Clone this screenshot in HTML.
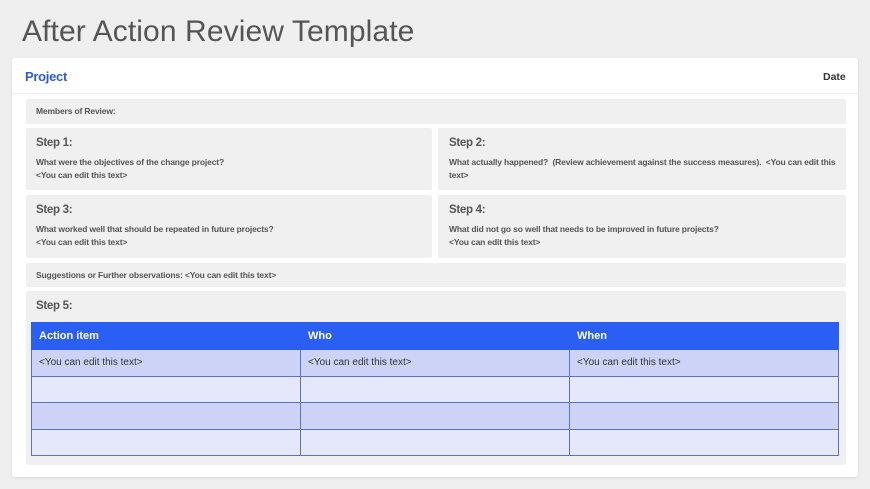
<!DOCTYPE html>
<html><head><meta charset="utf-8"><style>
*{margin:0;padding:0;box-sizing:border-box}
body{width:870px;height:489px;background:#efefef;font-family:"Liberation Sans",sans-serif;position:relative;overflow:hidden}
.abs{position:absolute}
h1{position:absolute;left:22px;top:15px;font-size:30px;font-weight:normal;color:#555;letter-spacing:0.1px}
.card{left:12px;top:58px;width:846px;height:419px;background:#fff;border-radius:3px;box-shadow:0 1px 3px rgba(0,0,0,.1)}
.box{background:#f0f0f0;border-radius:2px}
.st{font-size:11.5px;font-weight:bold;color:#555;letter-spacing:-0.3px}
.tx{font-size:8.5px;color:#555;line-height:13px;font-weight:bold;letter-spacing:-0.15px;white-space:nowrap}
table{position:absolute;left:31px;top:322px;width:808px;border-collapse:collapse;font-size:10px;color:#333}
td{border:1px solid #5b72c8;height:26.5px;padding-left:7px}
th{background:#2b5ef2;color:#fff;text-align:left;padding-left:7px;height:27px;font-size:11px;border:1px solid #2b5ef2}
.a td{background:#ccd3f7}.b td{background:#e5e8fb}
</style></head><body>
<h1>After Action Review Template</h1>
<div class="abs card"></div>
<div class="abs" style="left:12px;top:93px;width:846px;height:1px;background:#eee"></div>
<div class="abs" style="left:25px;top:69px;font-size:13px;font-weight:bold;color:#2e5bd0;letter-spacing:-0.3px">Project</div>
<div class="abs" style="left:823px;top:71px;font-size:10.5px;font-weight:bold;color:#333">Date</div>
<div class="abs box" style="left:26px;top:99px;width:820px;height:25px"><div class="tx abs" style="left:10px;top:6px">Members of Review:</div></div>
<div class="abs box" style="left:26px;top:128px;width:406px;height:62px"><div class="st abs" style="left:10px;top:9px">Step 1:</div><div class="tx abs" style="left:10px;top:28px">What were the objectives of the change project?<br>&lt;You can edit this text&gt;</div></div>
<div class="abs box" style="left:438px;top:128px;width:408px;height:62px"><div class="st abs" style="left:11px;top:9px">Step 2:</div><div class="tx abs" style="left:11px;top:28px">What actually happened?&nbsp; (Review achievement against the success measures).&nbsp; &lt;You can edit this<br>text&gt;</div></div>
<div class="abs box" style="left:26px;top:195px;width:406px;height:63px"><div class="st abs" style="left:10px;top:9px">Step 3:</div><div class="tx abs" style="left:10px;top:28px">What worked well that should be repeated in future projects?<br>&lt;You can edit this text&gt;</div></div>
<div class="abs box" style="left:438px;top:195px;width:408px;height:63px"><div class="st abs" style="left:11px;top:9px">Step 4:</div><div class="tx abs" style="left:11px;top:28px">What did not go so well that needs to be improved in future projects?<br>&lt;You can edit this text&gt;</div></div>
<div class="abs box" style="left:26px;top:263px;width:820px;height:24px"><div class="tx abs" style="left:10px;top:6px">Suggestions or Further observations: &lt;You can edit this text&gt;</div></div>
<div class="abs box" style="left:26px;top:291px;width:820px;height:174px"><div class="st abs" style="left:10px;top:9px">Step 5:</div></div>
<table>
<tr><th style="width:269px">Action item</th><th style="width:269px">Who</th><th>When</th></tr>
<tr class="a"><td>&lt;You can edit this text&gt;</td><td>&lt;You can edit this text&gt;</td><td>&lt;You can edit this text&gt;</td></tr>
<tr class="b"><td></td><td></td><td></td></tr>
<tr class="a"><td></td><td></td><td></td></tr>
<tr class="b"><td></td><td></td><td></td></tr>
</table>
</body></html>
